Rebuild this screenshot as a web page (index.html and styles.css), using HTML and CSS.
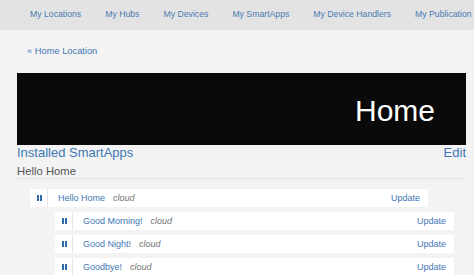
FILE: index.html
```html
<!DOCTYPE html>
<html lang="en">
<head>
    <meta charset="UTF-8">
    <title>Home Location</title>
    <link rel="stylesheet" href="styles.css">
</head>
<body>
    <div class="topnav">
        <a href="#">My Locations</a>
        <a href="#">My Hubs</a>
        <a href="#">My Devices</a>
        <a href="#">My SmartApps</a>
        <a href="#">My Device Handlers</a>
        <a href="#">My Publication</a>
    </div>

    <div class="page">
        <a class="back" href="#">&laquo; Home Location</a>

        <div class="banner">Home</div>

        <div class="section-head">
            <a href="#">Installed SmartApps</a>
            <a href="#">Edit</a>
        </div>

        <h3 class="group">Hello Home</h3>

        <div class="app-list">
            <div class="app-row">
                <span class="handle"><i></i><i></i></span>
                <a class="app-name" href="#">Hello Home</a>
                <span class="app-type">cloud</span>
                <a class="update" href="#">Update</a>
            </div>
            <div class="app-row child">
                <span class="handle"><i></i><i></i></span>
                <a class="app-name" href="#">Good Morning!</a>
                <span class="app-type">cloud</span>
                <a class="update" href="#">Update</a>
            </div>
            <div class="app-row child">
                <span class="handle"><i></i><i></i></span>
                <a class="app-name" href="#">Good Night!</a>
                <span class="app-type">cloud</span>
                <a class="update" href="#">Update</a>
            </div>
            <div class="app-row child">
                <span class="handle"><i></i><i></i></span>
                <a class="app-name" href="#">Goodbye!</a>
                <span class="app-type">cloud</span>
                <a class="update" href="#">Update</a>
            </div>
        </div>
    </div>
</body>
</html>
```

FILE: styles.css
```css
:root {
    --bg-color: #f3f3f3;
    --nav-bg: #e3e3e3;
    --link-color: #3f77b5;
    --text-color: #555555;
    --line-color: #e2e2e2;
}
* {
    margin: 0;
    padding: 0;
    box-sizing: border-box;
}
body {
    font-family: 'Liberation Sans', Arial, sans-serif;
    background-color: var(--bg-color);
    color: var(--text-color);
    overflow: hidden;
}
a {
    color: var(--link-color);
    text-decoration: none;
}
.topnav {
    height: 30px;
    background-color: var(--nav-bg);
    display: flex;
    align-items: center;
    gap: 24px;
    padding-left: 30px;
    white-space: nowrap;
    font-size: 8.7px;
    padding-bottom: 2px;
}
.topnav a {
    color: #4a7ab3;
}
.page {
    padding: 0 8px 0 17px;
}
.back {
    display: inline-block;
    margin: 15px 0 0 10px;
    font-size: 9.3px;
    line-height: 12px;
}
.banner {
    margin-top: 15px;
    height: 72px;
    background-color: #0a0a0a;
    color: #ffffff;
    font-size: 30px;
    display: flex;
    align-items: center;
    justify-content: flex-end;
    padding: 4px 31px 0 0;
}
.section-head {
    display: flex;
    justify-content: space-between;
    font-size: 13px;
    line-height: 16px;
}
.group {
    margin-top: 3px;
    font-size: 11.3px;
    font-weight: normal;
    line-height: 14px;
    border-bottom: 1px solid var(--line-color);
}
.app-list {
    display: flex;
    flex-direction: column;
    gap: 5px;
    padding-top: 10px;
}
.app-row {
    height: 18px;
    margin: 0 38px 0 13px;
    background-color: #ffffff;
    display: flex;
    align-items: center;
    font-size: 9px;
}
.app-row.child {
    margin: 0 12px 0 38px;
}
.handle {
    width: 18px;
    height: 100%;
    border-right: 1px solid #e6e6e6;
    display: flex;
    align-items: center;
    gap: 1px;
    padding-left: 7px;
}
.handle i {
    width: 2px;
    height: 6px;
    background-color: #2f6aa9;
}
.app-name {
    margin-left: 10px;
}
.app-type {
    margin-left: 8px;
    font-style: italic;
    color: #777777;
}
.update {
    margin-left: auto;
    padding-right: 8px;
}
```
